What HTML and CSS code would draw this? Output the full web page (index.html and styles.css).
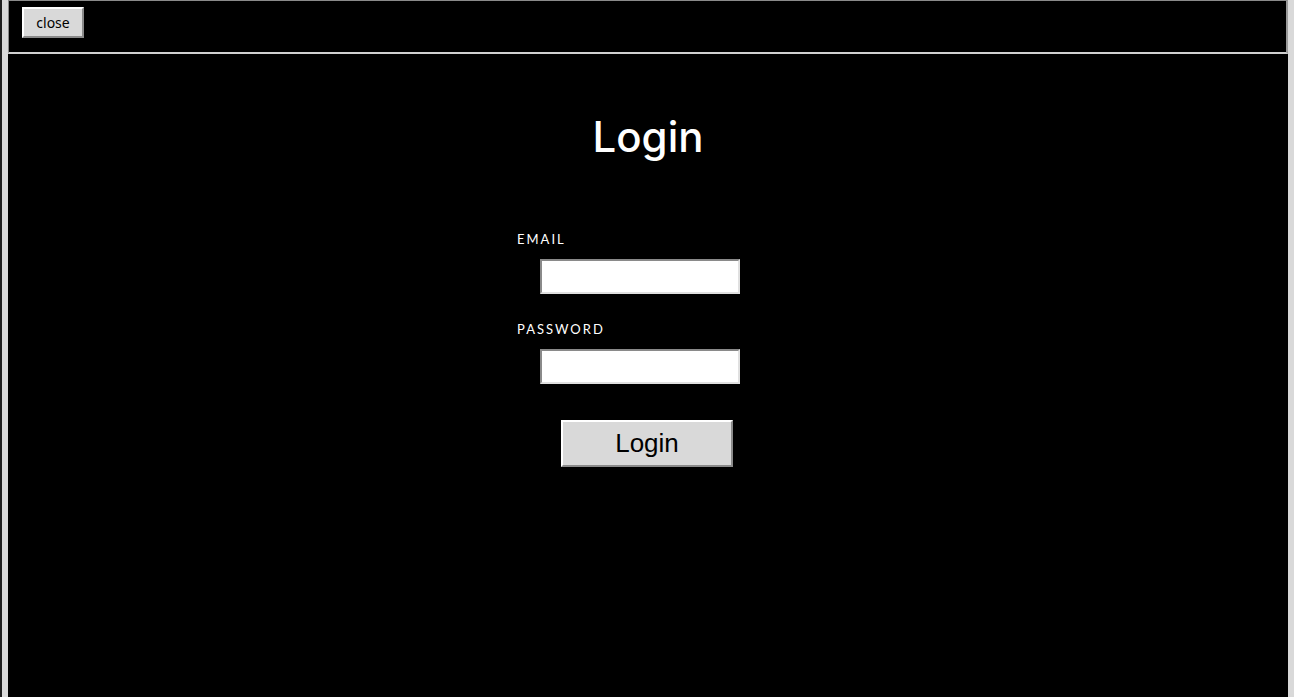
FILE: index.html
```html
<!DOCTYPE html>
<html>
<head>
<meta charset="utf-8">
<link rel="stylesheet" href="styles.css">
</head>
<body>
<div class="frame">
  <div class="topbar">
    <button class="close-btn">close</button>
  </div>
  <main class="content">
    <h1 class="title">Login</h1>
    <form class="form">
      <label class="label">EMAIL</label>
      <input class="field" type="text">
      <label class="label">PASSWORD</label>
      <input class="field" type="password">
    </form>
    <button class="login-btn">Login</button>
  </main>
</div>
</body>
</html>
```
FILE: styles.css
```css
html, body {
  margin: 0;
  padding: 0;
  height: 100%;
}
body {
  background: #d9d9d9;
  border-left: 2px solid #1f1f1f;
  padding-left: 6px;
  padding-right: 6px;
  box-sizing: border-box;
  overflow: hidden;
}
.frame {
  display: flex;
  flex-direction: column;
  height: 100%;
}
.topbar {
  background: #000;
  border-top: 1px solid #8a8a8a;
  border-left: 1px solid #8a8a8a;
  border-right: 2px solid #9a9a9a;
  border-bottom: 2px solid #d0d0d0;
  padding: 6px 0 0 13px;
  box-sizing: border-box;
  height: 54px;
}
.close-btn {
  display: block;
  width: 62px;
  height: 31px;
  background: #d9d9d9;
  border: 2px solid;
  border-color: #ffffff #8a8a8a #8a8a8a #ffffff;
  font-family: "Noto Sans", "Open Sans", sans-serif;
  font-size: 14px;
  color: #000;
  padding: 0;
}
.content {
  flex: 1;
  background: #000;
  display: flex;
  flex-direction: column;
  align-items: center;
  color: #fff;
}
.title {
  margin: 57px 0 0 0;
  font-family: "Inter", sans-serif;
  font-weight: 500;
  font-size: 42px;
  line-height: 52px;
  height: 52px;
}
.form {
  width: 262px;
  margin: 68px 0 0 0;
  display: flex;
  flex-direction: column;
}
.label {
  font-family: "Lato", sans-serif;
  font-size: 13px;
  letter-spacing: 2px;
  line-height: 16px;
  color: #fff;
}
.field {
  width: 200px;
  height: 35px;
  box-sizing: border-box;
  margin: 12px 0 27px 23px;
  background: #fff;
  border: 2px solid;
  border-color: #8a8a8a #e0e0e0 #e0e0e0 #8a8a8a;
  padding: 0 4px;
}
.field:last-child {
  margin-bottom: 0;
}
.login-btn {
  margin: 36px 2px 0 0;
  width: 172px;
  height: 47px;
  background: #d9d9d9;
  border: 2px solid;
  border-color: #ffffff #8a8a8a #8a8a8a #ffffff;
  font-family: "Liberation Sans", Arial, sans-serif;
  font-size: 26px;
  color: #000;
  padding: 0;
}
```
